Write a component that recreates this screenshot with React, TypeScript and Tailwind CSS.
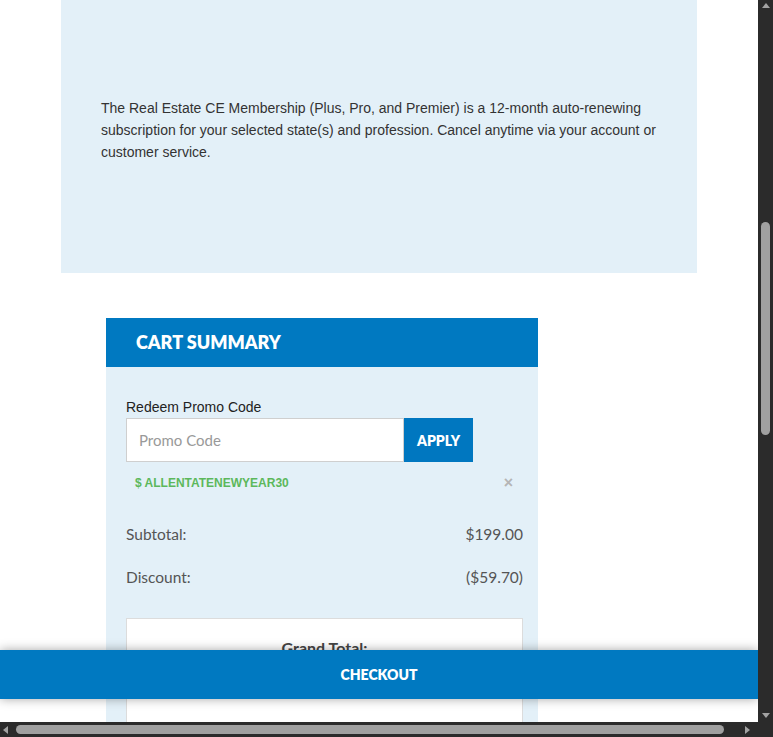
const sans = "font-['Liberation_Sans',Arial,sans-serif]";
const geo = "font-['Lato','Open_Sans',sans-serif]";

const Arrow = ({ dir }: { dir: "up" | "down" | "left" | "right" }) => {
  const pts = {
    up: "0,6 4,1 8,6",
    down: "0,1 4,6 8,1",
    left: "6,0 1,4 6,8",
    right: "1,0 6,4 1,8",
  }[dir];
  return (
    <svg width="8" height="8" viewBox="0 0 8 8">
      <polygon points={pts} fill="#a3a3a3" />
    </svg>
  );
};

const Row = ({ label, value }: { label: string; value: string }) => (
  <div className={`flex justify-between text-[15.5px] leading-5 text-[#555] ${geo}`}>
    <span>{label}</span>
    <span>{value}</span>
  </div>
);

const CartSummary = () => (
  <div className="ml-[106px] mt-[45px] w-[432px]">
    <div className="flex h-[49px] items-center bg-[#0079c1] px-[30px]">
      <h2 className={`text-[18px] font-extrabold text-white ${geo}`}>CART SUMMARY</h2>
    </div>
    <div className="bg-[#e3f0f8] pl-5 pr-[15px] pt-8 pb-10">
      <label className={`block text-[14px] leading-4 text-[#222] ${sans}`}>Redeem Promo Code</label>
      <div className="mt-[3px] flex">
        <input
          placeholder="Promo Code"
          className={`h-[44px] w-[278px] border border-[#cfcfcf] bg-white px-3 text-[15px] placeholder-[#999] outline-none ${geo}`}
        />
        <button className={`h-[44px] w-[69px] bg-[#0077c0] text-[14px] font-extrabold text-white ${geo}`}>
          APPLY
        </button>
      </div>
      <div className="mt-[14px] flex items-center justify-between pl-[9px] pr-[10px]">
        <span className={`text-[12px] leading-[14px] font-bold text-[#5cb85c] ${sans}`}>$ ALLENTATENEWYEAR30</span>
        <span className={`text-[16px] leading-[14px] font-bold text-[#b5b5b5] ${sans}`}>×</span>
      </div>
      <div className="mt-[34px] flex flex-col gap-[23px]">
        <Row label="Subtotal:" value="$199.00" />
        <Row label="Discount:" value="($59.70)" />
      </div>
      <div className="mt-[31px] h-[140px] border border-[#dcdcdc] bg-white pt-[17px] text-center">
        <span className={`text-[16px] font-bold text-[#444] ${geo}`}>Grand Total:</span>
      </div>
    </div>
  </div>
);

export default function App() {
  return (
    <div className="flex h-[737px] w-[773px] flex-col overflow-hidden bg-[#2b2b2b]">
      <div className="flex h-[722px]">
        <div className="relative flex-1 overflow-hidden bg-white">
          <div className="ml-[61px] h-[273px] w-[636px] bg-[#e3f0f8] px-10 pt-[97px]">
            <p className={`text-[14px] leading-[22px] text-[#333] ${sans}`}>
              The Real Estate CE Membership (Plus, Pro, and Premier) is a 12-month auto-renewing subscription for your
              selected state(s) and profession. Cancel anytime via your account or customer service.
            </p>
          </div>
          <CartSummary />
          <div className="absolute bottom-[23px] left-0 right-0 flex h-[49px] items-center justify-center bg-[#0079c1] shadow-[0_0_10px_rgba(0,0,0,0.35)]">
            <span className={`text-[14px] font-extrabold text-white ${geo}`}>CHECKOUT</span>
          </div>
        </div>
        <div className="flex w-[15px] flex-col items-center py-[2px]">
          <Arrow dir="up" />
          <div className="mt-[212px] h-[213px] w-[9px] rounded-full bg-[#a0a0a0]" />
          <div className="flex-1" />
          <Arrow dir="down" />
        </div>
      </div>
      <div className="flex h-[15px]">
        <div className="flex flex-1 items-center px-[2px]">
          <Arrow dir="left" />
          <div className="ml-[6px] h-[9px] w-[708px] rounded-full bg-[#a0a0a0]" />
          <div className="flex-1" />
          <Arrow dir="right" />
          <div className="w-[4px]" />
        </div>
        <div className="w-[15px]" />
      </div>
    </div>
  );
}
